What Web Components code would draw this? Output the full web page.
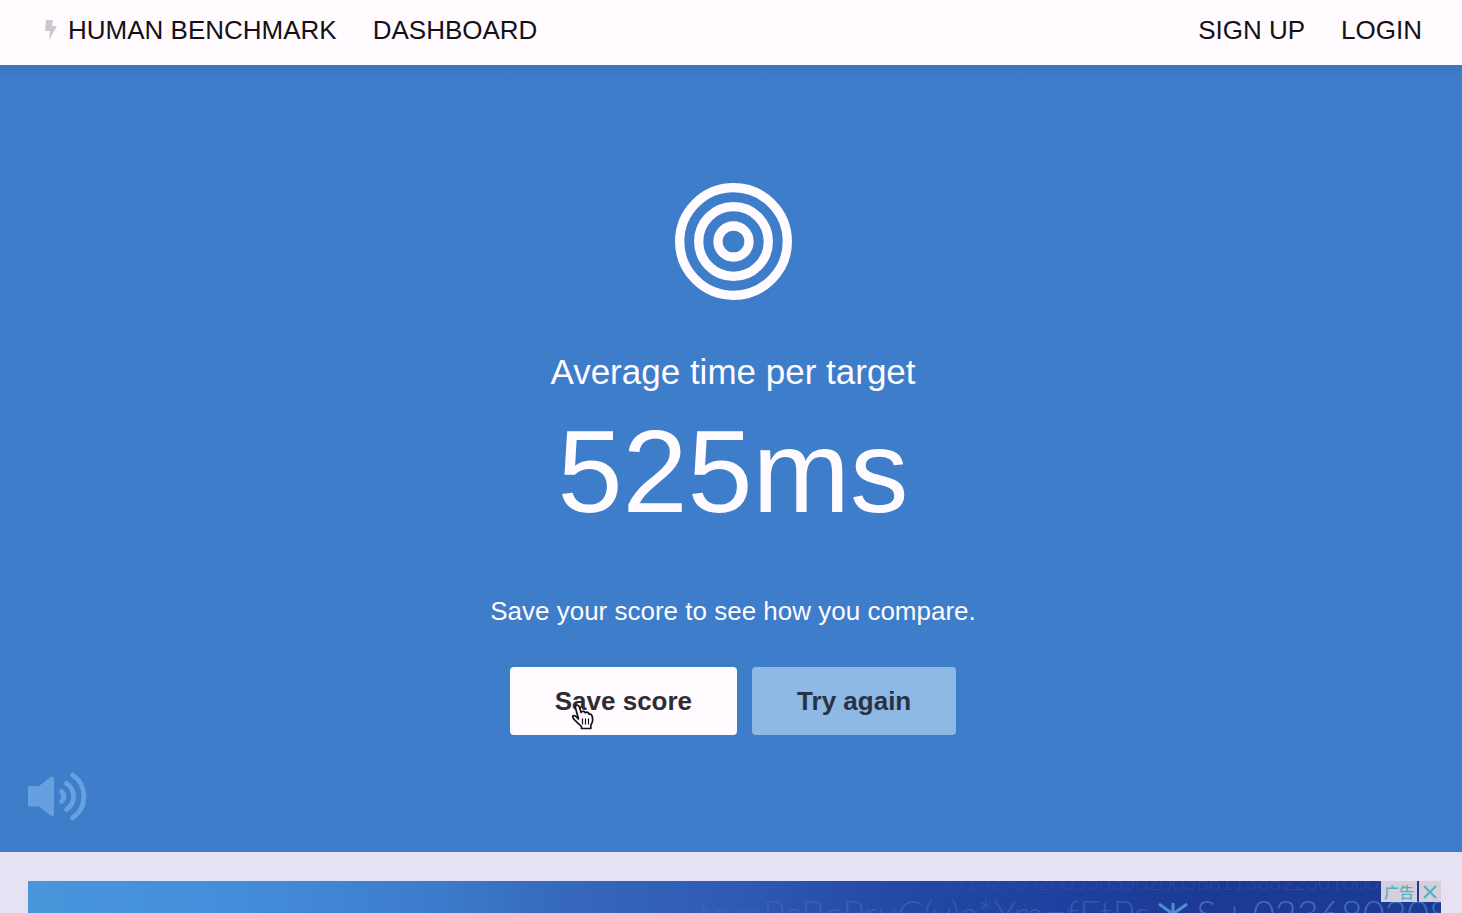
<!DOCTYPE html>
<html lang="en">
<head>
<meta charset="utf-8">
<meta name="viewport" content="width=device-width, initial-scale=1">
<title>Human Benchmark</title>
<style>
    body {
        margin: 0;
        min-height: 100vh;
        background: #e6e1f3;
        font-family: "Liberation Sans", Arial, sans-serif;
    }
</style>
</head>
<body>
<benchmark-app></benchmark-app>

<script>
class SiteHeader extends HTMLElement {
    constructor() {
        super();
        this.attachShadow({ mode: 'open' });
        this.shadowRoot.innerHTML = `
            <style>
                :host {
                    display: block;
                    background: #fffbff;
                    color: #151017;
                }

                nav {
                    display: flex;
                    justify-content: space-between;
                    padding: 0 40px 5px 44px;
                    font-size: 26px;
                    line-height: 60px;
                }

                .group {
                    display: flex;
                    align-items: center;
                    gap: 36px;
                }

                a, ::slotted(a) {
                    color: inherit;
                    text-decoration: none;
                }

                .brand {
                    display: flex;
                    align-items: center;
                    gap: 10px;
                }
            </style>
            <nav>
                <div class="group">
                    <a class="brand" href="#home">
                        <svg width="14" height="20" viewBox="0 0 14 20" aria-hidden="true">
                            <path d="M2 0H9L8 6H13L5 20L6 11H1Z" fill="#cbc7cd"/>
                        </svg>
                        <span>HUMAN BENCHMARK</span>
                    </a>
                    <slot></slot>
                </div>
                <div class="group"><slot name="account"></slot></div>
            </nav>
        `;
    }
}

class TargetIcon extends HTMLElement {
    constructor() {
        super();
        this.attachShadow({ mode: 'open' });
        this.shadowRoot.innerHTML = `
            <style>
                :host { display: block; }
                svg { display: block; }
            </style>
            <svg width="117" height="117" viewBox="0 0 117 117" fill="none" stroke="currentColor" stroke-width="9.3" aria-hidden="true">
                <circle cx="58.5" cy="58.5" r="53.8"/>
                <circle cx="58.5" cy="58.5" r="34.8"/>
                <circle cx="58.5" cy="58.5" r="15.5"/>
            </svg>
        `;
    }
}

class ActionButton extends HTMLElement {
    constructor() {
        super();
        this.attachShadow({ mode: 'open' });
        this.shadowRoot.innerHTML = `
            <style>
                :host {
                    display: block;
                    position: relative;
                }

                button {
                    display: block;
                    margin: 0;
                    padding: 0 45px;
                    border: 0;
                    border-radius: 4px;
                    background: #8db9e4;
                    color: #2b3145;
                    font: bold 26px/68px "Liberation Sans", Arial, sans-serif;
                    cursor: pointer;
                }

                :host([primary]) button {
                    background: #fffbff;
                    color: #302c34;
                }

                /* Pointer lies over the label */
                ::slotted([slot="pointer"]) {
                    position: absolute;
                    left: 61px;
                    top: 36px;
                    pointer-events: none;
                }
            </style>
            <button type="button"><slot></slot></button>
            <slot name="pointer"></slot>
        `;
    }
}

class HandPointer extends HTMLElement {
    constructor() {
        super();
        this.attachShadow({ mode: 'open' });
        this.shadowRoot.innerHTML = `
            <style>
                :host { display: block; }
                svg { display: block; }
            </style>
            <svg width="24" height="28" viewBox="0 0 24 28" aria-hidden="true">
                <path d="M7.500 16L4.500 5Q4 2.500 5.800 2.100Q7.600 1.900 8.300 4L10.200 9.500Q11 8 12.400 8.300Q13.900 8.600 14.200 9.800Q15.300 8.700 16.700 9.400Q17.900 9.900 18.200 11.200Q20.200 10.500 21 12.700Q22.100 16 21.300 19L19.800 22.500V25.500H10.500V23.500L3.500 16.900Q1 14 2 12.900Q3.700 11.800 5.700 14.200Z"
                      fill="#fffbff" stroke="#151217" stroke-width="1.700" stroke-linejoin="round"/>
                <path d="M11.500 15.500V21.500M14.500 15.500V21.500M17.500 15.500V21.500" stroke="#151217" stroke-width="1.200" fill="none"/>
            </svg>
        `;
    }
}

class SoundToggle extends HTMLElement {
    constructor() {
        super();
        this.attachShadow({ mode: 'open' });
        this.shadowRoot.innerHTML = `
            <style>
                :host { display: block; }

                button {
                    display: block;
                    padding: 0;
                    border: 0;
                    background: none;
                    color: #67a0de;
                    cursor: pointer;
                }

                svg { display: block; }
            </style>
            <button type="button" aria-label="Sound">
                <svg width="60" height="51" viewBox="0 0 60 51" aria-hidden="true">
                    <path d="M1 15H11L22 6.500Q26 4 26 7.500V43Q26 46.500 22 44L11 35.500H1Q0 35.500 0 34.500V16Q0 15 1 15Z" fill="currentColor"/>
                    <g fill="none" stroke="currentColor" stroke-width="4.800" stroke-linecap="round">
                        <path d="M33.500 20.500Q38.500 25.500 33.500 30.500"/>
                        <path d="M38.500 12.500A15.500 15.500 0 0 1 38.500 38.500"/>
                        <path d="M44.500 4A26 26 0 0 1 44.500 47"/>
                    </g>
                </svg>
            </button>
        `;
    }
}

class ResultPanel extends HTMLElement {
    constructor() {
        super();
        this.attachShadow({ mode: 'open' });
        this.shadowRoot.innerHTML = `
            <style>
                :host {
                    display: flex;
                    flex-direction: column;
                    align-items: center;
                    padding: 118px 24px 30px 28px;
                    background: linear-gradient(#4074c3, #3d7dca 14px);
                    color: #fffbff;
                    text-align: center;
                }

                h1, h2, p { margin: 0; font-weight: normal; }

                h2 {
                    margin-top: 46px;
                    font-size: 35px;
                    line-height: 52px;
                }

                h1 {
                    margin-top: 4px;
                    font-size: 117px;
                    line-height: 140px;
                }

                p {
                    margin-top: 50px;
                    font-size: 26px;
                    line-height: 38px;
                }

                .actions {
                    display: flex;
                    flex-wrap: wrap;
                    justify-content: center;
                    gap: 15px;
                    margin-top: 37px;
                }

                sound-toggle {
                    align-self: flex-start;
                    margin-top: 36px;
                }
            </style>
            <target-icon></target-icon>
            <h2><slot name="label"></slot></h2>
            <h1><slot name="score"></slot></h1>
            <p><slot name="hint"></slot></p>
            <div class="actions"><slot></slot></div>
            <sound-toggle></sound-toggle>
        `;
    }
}

class AdBanner extends HTMLElement {
    constructor() {
        super();
        this.attachShadow({ mode: 'open' });
        this.shadowRoot.innerHTML = `
            <style>
                :host {
                    display: block;
                    position: relative;
                    overflow: hidden;
                    background: linear-gradient(90deg, #4996dc, #448ddb 15%, #3c7bcb 29%, #366abd 37%, #2e57b2 52%, #2249a3 62%, #1f40a0 73%, #1c3a94 84%, #1c3a94);
                    font-family: Lato, "Noto Sans CJK SC", sans-serif;
                    font-weight: 300;
                    white-space: nowrap;
                }

                .digits {
                    display: flex;
                    justify-content: flex-end;
                    padding-right: 62px;
                    height: 12px;
                    font-size: 21px;
                    line-height: 2px;
                    color: #31539f;
                    opacity: 0.7;
                }

                /* The row runs off the right edge of the banner */
                .glyphs {
                    display: flex;
                    justify-content: flex-end;
                    gap: 7px;
                    margin-right: -10px;
                    font-size: 38px;
                    line-height: 40px;
                    color: #3d6db8;
                }

                .glyphs svg { margin-top: 8px; }

                .faint { opacity: 0.6; }

                /* Ad choices sit over the artwork */
                .choices {
                    position: absolute;
                    top: 0;
                    right: 0;
                    display: flex;
                    gap: 2px;
                }

                .choices a, .choices button {
                    display: flex;
                    align-items: center;
                    justify-content: center;
                    height: 21px;
                    padding: 0 3px;
                    border: 0;
                    background: #d6cedb;
                    color: #4db4c3;
                    font: 500 15px/21px "Noto Sans CJK SC", sans-serif;
                    text-decoration: none;
                }
            </style>
            <div class="digits">931023002005503502003681138822301000</div>
            <div class="glyphs">
                <span class="faint">tomPcBcPruC(v)a*Ym=fFtPs</span>
                <svg width="32" height="24" viewBox="0 0 32 24" fill="none" stroke="#4f8fd0" stroke-width="3" aria-hidden="true">
                    <path d="M2 3L16 13L30 3M16 2V24M4 15H28"/>
                </svg>
                <span>S</span><span>±</span><span>023680208</span>
            </div>
            <div class="choices">
                <a href="#ad">广告</a>
                <button type="button" aria-label="Close ad">
                    <svg width="16" height="16" viewBox="0 0 16 16" aria-hidden="true">
                        <path d="M2 2L14 14M14 2L2 14" stroke="currentColor" stroke-width="2" fill="none"/>
                    </svg>
                </button>
            </div>
        `;
    }
}

class BenchmarkApp extends HTMLElement {
    constructor() {
        super();
        this.attachShadow({ mode: 'open' });
        this.shadowRoot.innerHTML = `
            <style>
                :host {
                    display: flex;
                    flex-direction: column;
                    height: 100vh;
                }

                site-header, result-panel { flex: none; }

                a { color: inherit; text-decoration: none; }

                ad-banner {
                    flex: 1;
                    min-height: 0;
                    margin: 29px 21px 0 28px;
                }
            </style>
            <site-header>
                <a href="#dashboard">DASHBOARD</a>
                <a slot="account" href="#signup">SIGN UP</a>
                <a slot="account" href="#login">LOGIN</a>
            </site-header>
            <result-panel>
                <span slot="label">Average time per target</span>
                <span slot="score">525ms</span>
                <span slot="hint">Save your score to see how you compare.</span>
                <action-button primary>Save score<hand-pointer slot="pointer"></hand-pointer></action-button>
                <action-button>Try again</action-button>
            </result-panel>
            <ad-banner></ad-banner>
        `;
    }
}

customElements.define('site-header', SiteHeader);
customElements.define('target-icon', TargetIcon);
customElements.define('hand-pointer', HandPointer);
customElements.define('action-button', ActionButton);
customElements.define('sound-toggle', SoundToggle);
customElements.define('result-panel', ResultPanel);
customElements.define('ad-banner', AdBanner);
customElements.define('benchmark-app', BenchmarkApp);
</script>
</body>
</html>
